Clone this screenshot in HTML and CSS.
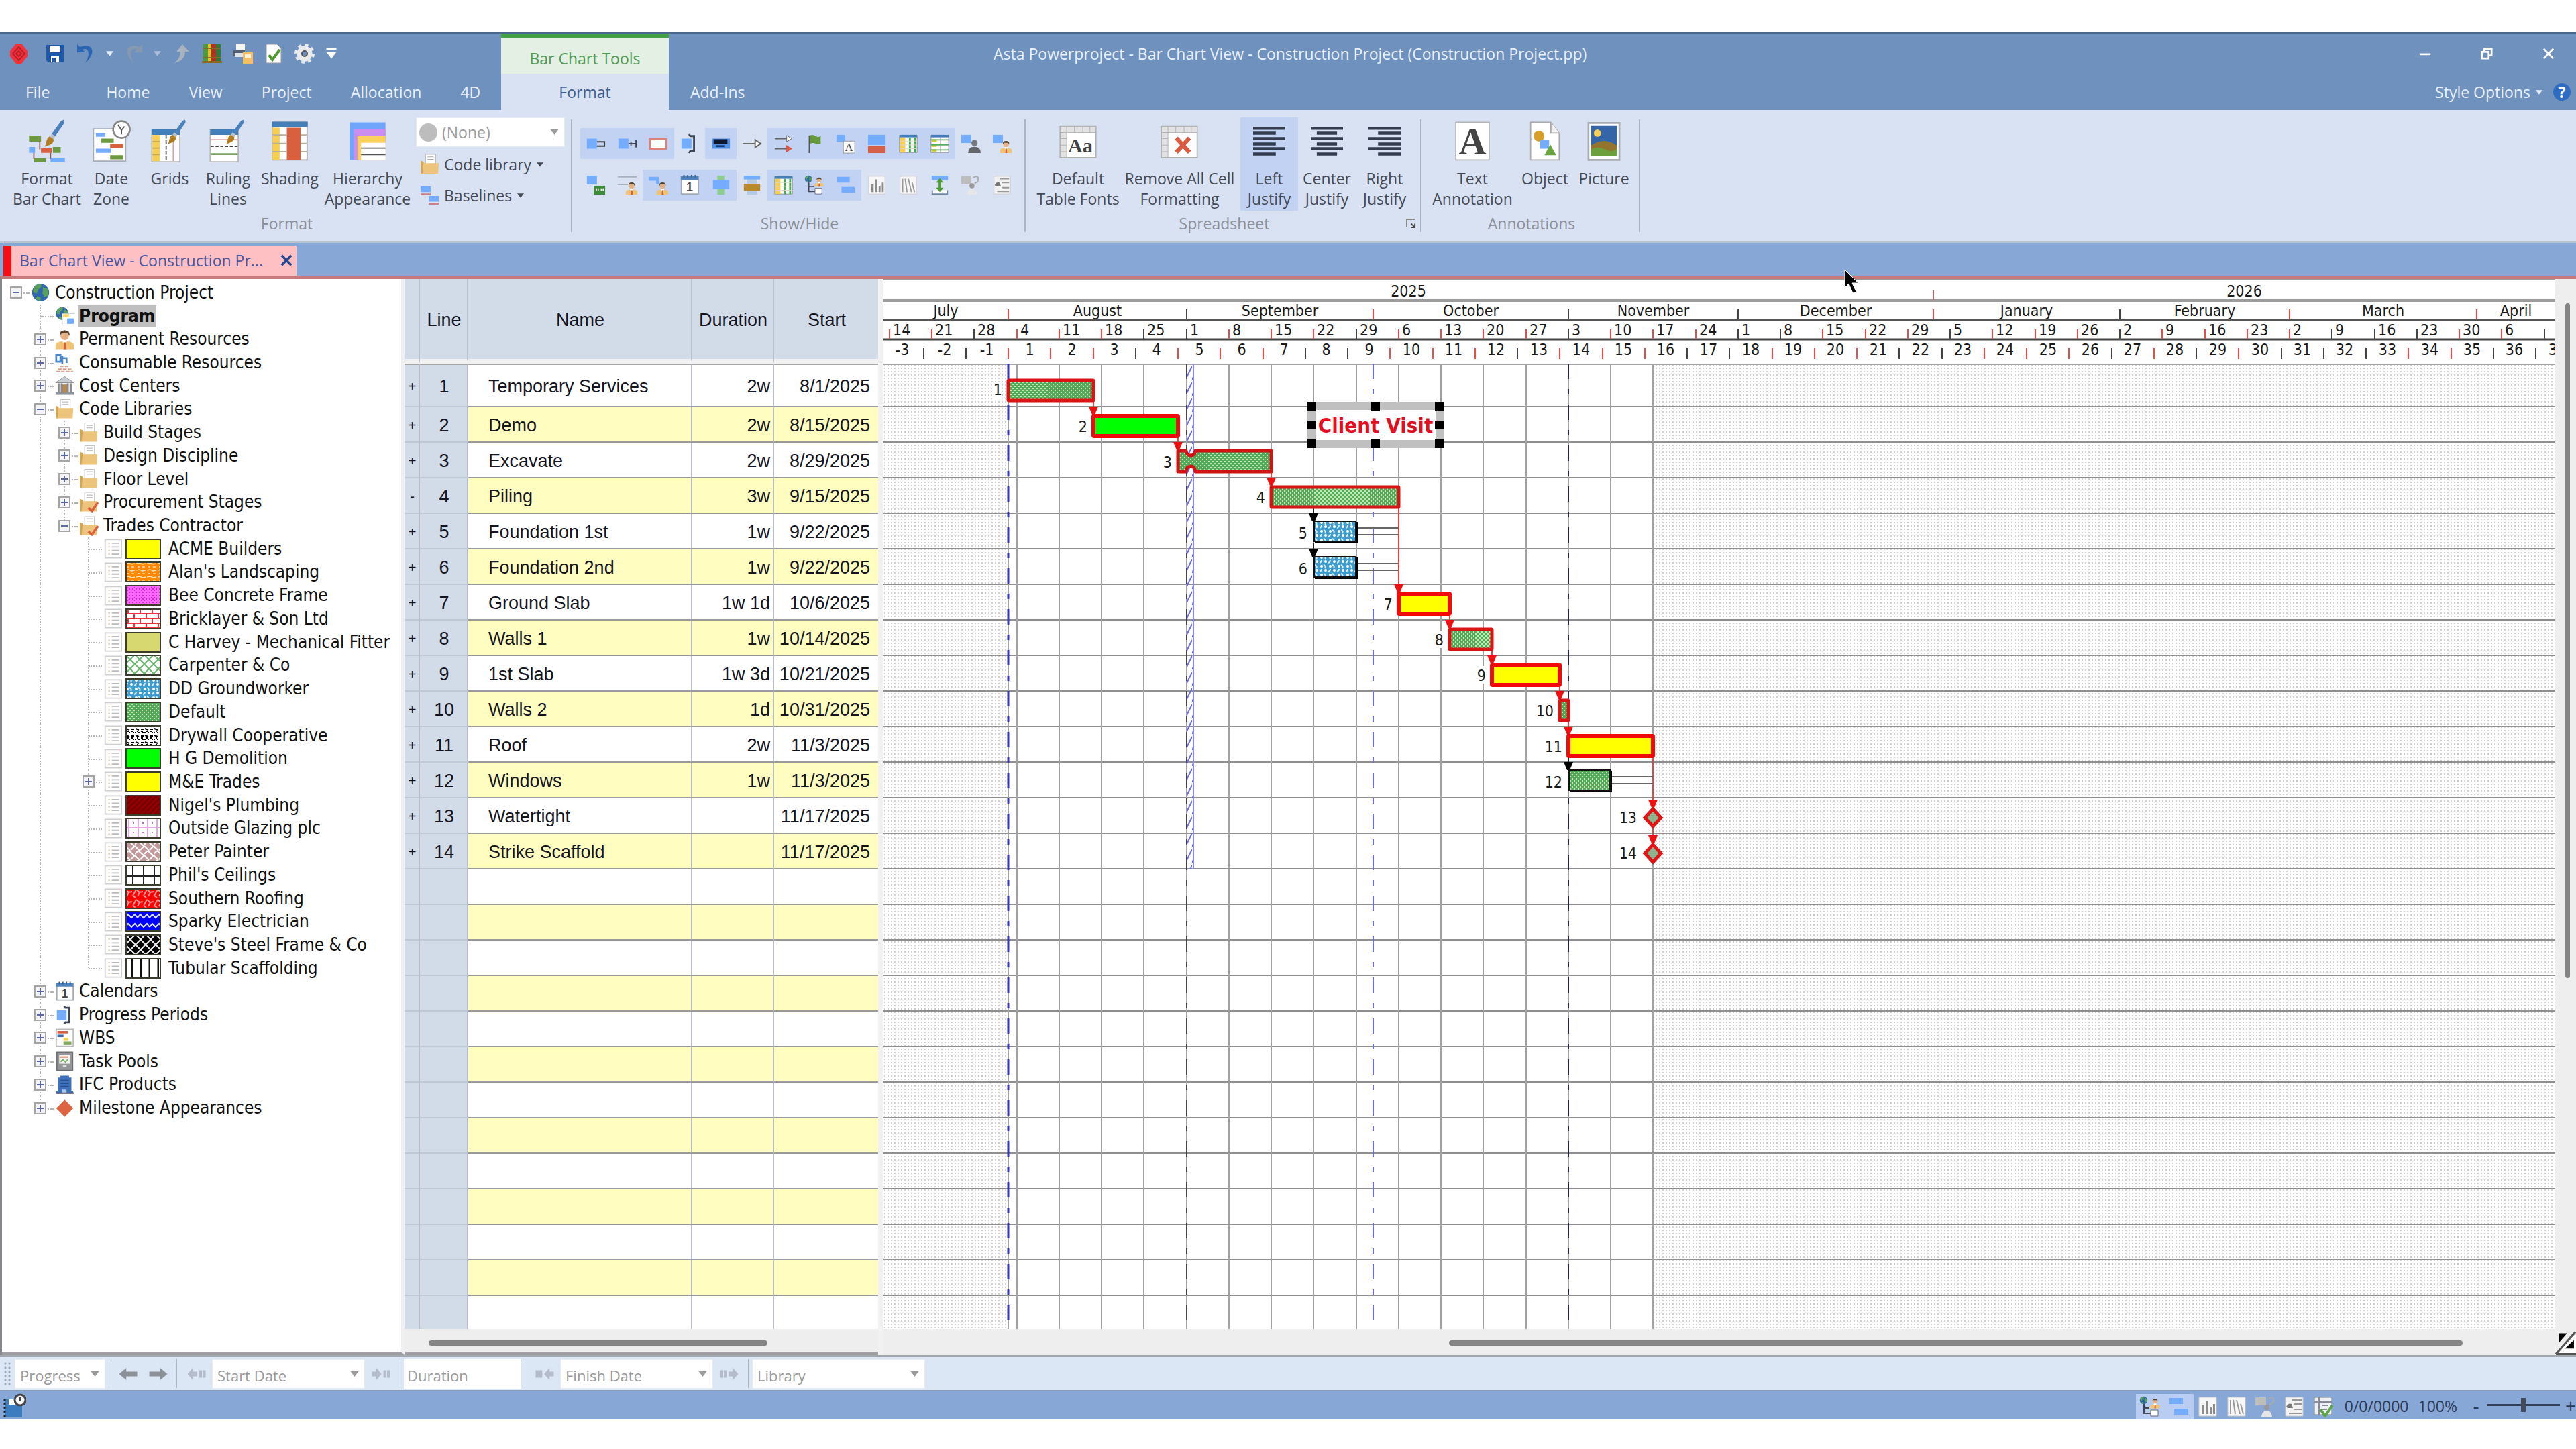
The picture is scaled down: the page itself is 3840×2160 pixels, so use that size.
FILE: index.html
```html
<!DOCTYPE html>
<html lang="en">
  <head>
    <meta charset="utf-8">
    <title>Asta Powerproject - Bar Chart View - Construction Project</title>
    <link rel="stylesheet" href="styles.css">
  </head>
  <body>
    <!-- fill patterns shared by the swatches and the bars -->
    <svg class="patterns" width="0" height="0" aria-hidden="true">
      <defs>
        <pattern id="p-default" width="6" height="6" patternUnits="userSpaceOnUse"><rect width="6" height="6" fill="#55aa58"/><path d="M0 0h2v2H0zM3 3h2v2H3z" fill="#c4e4c4"/></pattern>
        <pattern id="p-orange" width="16" height="10" patternUnits="userSpaceOnUse"><rect width="16" height="10" fill="#ff8800"/><path d="M0 3l5-1 4 2 5-1M2 8h3m4 0h4" stroke="#ffe0b0" stroke-width="1.5" fill="none"/></pattern>
        <pattern id="p-pink" width="5" height="5" patternUnits="userSpaceOnUse"><rect width="5" height="5" fill="#ff66ff"/><path d="M0 0h2v2H0zM3 3h1v1H3z" fill="#c030c8"/></pattern>
        <pattern id="p-brick" width="18" height="14" patternUnits="userSpaceOnUse"><rect width="18" height="14" fill="#fff"/><path d="M0 1h18M0 8h18M4 1v7M13 8v6" stroke="#f0303c" stroke-width="2"/></pattern>
        <pattern id="p-lattice" width="14" height="14" patternUnits="userSpaceOnUse"><rect width="14" height="14" fill="#fff"/><path d="M0 0l14 14M14 0L0 14" stroke="#69b56c" stroke-width="2"/></pattern>
        <pattern id="p-blue" width="13" height="13" patternUnits="userSpaceOnUse"><rect width="13" height="13" fill="#3d9bd0"/><circle cx="3" cy="3" r="2" fill="#fff"/><circle cx="9" cy="9" r="2" fill="#fff"/><path d="M6 1q4 2 2 5M0 11q3-1 3-4" stroke="#d8effc" stroke-width="2" fill="none"/></pattern>
        <pattern id="p-drywall" width="14" height="10" patternUnits="userSpaceOnUse"><rect width="14" height="10" fill="#fff"/><path d="M0 1h2m3 0h2m4 0h2M1 5l5 2m3-1h4M3 9h2m4 0h3" stroke="#000" stroke-width="2"/></pattern>
        <pattern id="p-maroon" width="8" height="8" patternUnits="userSpaceOnUse"><rect width="8" height="8" fill="#900000"/><path d="M0 8L8 0" stroke="#700000" stroke-width="2"/></pattern>
        <pattern id="p-glazing" width="14" height="14" patternUnits="userSpaceOnUse"><rect width="14" height="14" fill="#fff"/><path d="M5 0v14M0 1h14" stroke="#e2a5e6" stroke-width="2"/><path d="M11 7h2v2h-2z" fill="#c070c8"/></pattern>
        <pattern id="p-painter" width="14" height="14" patternUnits="userSpaceOnUse"><rect width="14" height="14" fill="#c39a9c"/><path d="M0 7l7 7M5 0l8 7M0 5l5-5M8 13l6-6" stroke="#fff" stroke-width="2"/></pattern>
        <pattern id="p-ceiling" x="-4" width="16" height="16" patternUnits="userSpaceOnUse"><rect width="16" height="16" fill="#fff"/><path d="M15 0v16M0 1h16" stroke="#222" stroke-width="2"/></pattern>
        <pattern id="p-roof" width="16" height="15" patternUnits="userSpaceOnUse"><rect width="16" height="15" fill="#f00"/><path d="M0 2l5 4 5-1M5 6l-3 6M16 2l-5 9M11 11l4 3" stroke="#ff9a9a" stroke-width="2" fill="none"/></pattern>
        <pattern id="p-spark" width="18" height="14" patternUnits="userSpaceOnUse"><rect width="18" height="14" fill="#00f"/><path d="M0 10l4-5 5 5 5-5 4 5" stroke="#dfe6ff" stroke-width="2" fill="none"/></pattern>
        <pattern id="p-steel" width="15" height="15" patternUnits="userSpaceOnUse"><rect width="15" height="15"/><path d="M0 0l15 15M15 0L0 15" stroke="#eee" stroke-width="2"/></pattern>
        <pattern id="p-tube" x="-2" width="13" height="10" patternUnits="userSpaceOnUse"><rect width="13" height="10" fill="#fff"/><path d="M12 0v10" stroke="#111" stroke-width="3"/></pattern>
        <pattern id="p-nonwork" width="5" height="5" patternUnits="userSpaceOnUse"><rect width="5" height="5" fill="#fff"/><path d="M1 1h2v2H1z" fill="#cfcfcf"/></pattern>
        <pattern id="p-holiday" width="10" height="24" patternUnits="userSpaceOnUse"><path d="M0 24L10 4" stroke="#6a6af0" stroke-width="2"/></pattern>
      </defs>
    </svg>

    <svg class="sprite" aria-hidden="true">
      <symbol id="brush" viewBox="0 0 40 72"><path d="M38 1q3 3 0 8L21 34l-7-5L33 3z" fill="#4a80bb"/><path d="M14 29l7 5-3 6-8-5z" fill="#b9c0c8"/><path d="M10 34l8 6c0 9-8 11-18 15 4-7 2-17 10-21z" fill="#b07c1e"/></symbol>
      <symbol id="person" viewBox="0 0 32 32"><path d="M1 32v-6q0-5 6-6l9-2 9 2q6 1 6 6v6z" fill="#f0c274"/><path d="M12 19l4 5 4-5v-3h-8z" fill="#fff"/><path d="M15 21h3l1 11h-5z" fill="#d2603c"/><circle cx="16" cy="10" r="7" fill="#e3b184"/><path d="M8 10q-1-9 8-9t8 9l-3-4H11z" fill="#57422c"/></symbol>
      <symbol id="globe" viewBox="0 0 32 32"><circle cx="16" cy="16" r="14" fill="#2f66ad"/><path d="M4 9q5-7 12-7 3 3 0 6l-5 4-1 6-6-2zM20 7l7 3q3 5 2 10l-6 4-4-6zM10 22l6 2v5q-5 0-9-4z" fill="#58a05c"/></symbol>

      <symbol id="logo" viewBox="0 0 32 32"><path d="M12 1h8l9 11v8l-9 11h-8L3 20v-8z" fill="#f5303a"/><path d="M16 6l9 10-9 10-9-10zM16 12l4 4-4 4-4-4z" fill="none" stroke="#b51f28" stroke-width="2"/></symbol>
      <symbol id="save" viewBox="0 0 32 32"><path d="M3 3h26v26H6l-3-3z" fill="#1f58a8"/><path d="M8 4h16v10H8zM10 20h12v9H10z" fill="#fff"/><path d="M12 22h5v7h-5z" fill="#1f58a8"/></symbol>
      <symbol id="undo" viewBox="0 0 32 32"><path d="M3 2v12h12l-4-4c7-4 14 4 4 20 18-16 11-31-8-24z" fill="#2b66b3"/></symbol>
      <symbol id="redo" viewBox="0 0 32 32"><path d="M29 2v12H17l4-4c-7-4-14 4-4 20C-1 14 6-1 25 6z" fill="#8698b0"/></symbol>
      <symbol id="up" viewBox="0 0 32 32"><path d="M18 2l10 11h-6q0 13-16 17 9-7 9-17H9z" fill="#a9b2bf"/></symbol>
      <symbol id="books" viewBox="0 0 32 32"><path d="M3 2h7v25H3z" fill="#4c9a3c"/><path d="M10 2h5v25h-5z" fill="#e6c02c"/><path d="M15 2h7v25h-7z" fill="#b3302a"/><path d="M22 2h7v25h-7z" fill="#2f7a34"/><path d="M1 27h30v3H1zM3 7h26v2H3zM3 21h26v2H3z" fill="#8a6a20"/></symbol>
      <symbol id="clone" viewBox="0 0 32 32"><path d="M6 1h13v12H6z" fill="#f4f4f4"/><path d="M1 11h18v8H1z" fill="#56616f"/><path d="M4 15h12v6H4z" fill="#dde3ea"/><path d="M16 14h15v17H16z" fill="#f4bd6a"/><path d="M19 17h9v5h-9z" fill="#fff3dc"/></symbol>
      <symbol id="check" viewBox="0 0 32 32"><path d="M5 2h16l6 6v22H5z" fill="#fff" stroke="#999"/><path d="M9 18l5 7L25 10" fill="none" stroke="#4f9a2e" stroke-width="4"/></symbol>
      <symbol id="gear" viewBox="0 0 32 32"><circle cx="16" cy="16" r="8" fill="none" stroke="#e9eaec" stroke-width="7"/><circle cx="16" cy="16" r="13" fill="none" stroke="#e9eaec" stroke-width="4" stroke-dasharray="5 5.2"/><circle cx="16" cy="16" r="4" fill="none" stroke="#555" stroke-width="2"/></symbol>
      <symbol id="more" viewBox="0 0 20 24"><path d="M1 2h18v3H1zM1 9h18l-9 12z" fill="#fff"/></symbol>
      <symbol id="caret" viewBox="0 0 12 8"><path d="M0 0h12L6 8z" fill="currentColor"/></symbol>

      <symbol id="format" viewBox="0 0 64 72"><path d="M2 27h20v10H2zM42 46h13v10H42zM10 65h20v10H10z" fill="#6d9a3f"/><path d="M2 46h10v10H2zM38 64h24v9H38z" fill="#74acff"/><path d="M22 48h18v8H22z" fill="#d8613f"/><path d="M20 36v14M10 56v10M38 56v10" stroke="#8a5b4b" stroke-width="2"/><use href="#brush" x="25" width="40" height="60"/></symbol>
      <symbol id="datezone" viewBox="0 0 64 72"><path d="M2 16h54v54H2z" fill="#fff" stroke="#a7adb6" stroke-width="2"/><path d="M6 23h16v6H6zM6 49h26v7H6z" fill="#74acff"/><path d="M15 32h21v7H15zM30 60h22v7H30z" fill="#6d9a3f"/><path d="M30 41h22v7H30z" fill="#d8613f"/><circle cx="49" cy="17" r="14" fill="#fff" stroke="#888" stroke-width="3"/><path d="M43 9l6 9 5-6M49 18v7" stroke="#555" stroke-width="2" fill="none"/></symbol>
      <symbol id="grids" viewBox="0 0 64 72"><path d="M2 17h47v54H2z" fill="#fff" stroke="#b6b6b6" stroke-width="2"/><path d="M2 17h47v9H2z" fill="#457fb8"/><path d="M3 26h12v44H3z" fill="#f6cf52"/><path d="M3 37h12M3 48h12M3 59h12" stroke="#c9a94d" stroke-width="2"/><path d="M26 26v44" stroke="#444" stroke-width="2" stroke-dasharray="6 3"/><path d="M38 26v44" stroke="#d9a3a3" stroke-width="2"/><use href="#brush" x="24" width="40" height="54"/></symbol>
      <symbol id="ruling" viewBox="0 0 64 72"><path d="M2 17h47v54H2z" fill="#fff" stroke="#b6b6b6" stroke-width="2"/><path d="M2 17h47v9H2z" fill="#457fb8"/><path d="M3 34h45" stroke="#dba8a8" stroke-width="2"/><path d="M3 45h45" stroke="#444" stroke-width="2" stroke-dasharray="5 3"/><path d="M3 58h45" stroke="#7aa55c" stroke-width="3"/><use href="#brush" x="24" width="40" height="54"/></symbol>
      <symbol id="shading" viewBox="0 0 64 72"><path d="M3 5h58v63H3z" fill="#fff" stroke="#aaa" stroke-width="2"/><path d="M3 14h12v54H3z" fill="#f6cf52"/><path d="M27 14h23v54H27z" fill="#d9603e"/><path d="M3 26h24M3 40h24M3 54h24M50 26h11M50 40h11M50 54h11" stroke="#b9b09a" stroke-width="2"/><path d="M2 4h60v9H2z" fill="#457fb8"/></symbol>
      <symbol id="hier" viewBox="0 0 64 72"><path d="M2 5h60v63H2z" fill="#6fa5fb"/><path d="M9 17h53v51H9z" fill="#cb8ef0"/><path d="M15 28h47v40H15z" fill="#fbd05c"/><path d="M21 39h41v29H21z" fill="#fff"/><path d="M21 48h41M21 59h41" stroke="#555" stroke-width="2"/></symbol>
      <symbol id="sheet-aa" viewBox="0 0 64 72"><path d="M2 12h60v52H2z" fill="#fff" stroke="#b2b2b2" stroke-width="2"/><path d="M3 13h58v9H3zM3 13h10v50H3z" fill="#e2e2e2"/><path d="M2 22h60M13 12v52M3 32h10M3 43h10M3 54h10M26 12v10M40 12v10M52 12v10" stroke="#adadad"/><text x="15" y="55" font-family="Liberation Serif, serif" font-weight="bold" font-size="34" fill="#444">Aa</text></symbol>
      <symbol id="sheet-x" viewBox="0 0 64 72"><path d="M2 12h60v52H2z" fill="#fff" stroke="#b2b2b2" stroke-width="2"/><path d="M3 13h58v9H3zM3 13h10v50H3z" fill="#e2e2e2"/><path d="M2 22h60M13 12v52M3 32h10M3 43h10M3 54h10M26 12v10M40 12v10M52 12v10" stroke="#adadad"/><path d="M27 31l22 24M49 31L27 55" stroke="#da5a40" stroke-width="7"/></symbol>
      <symbol id="jleft" viewBox="0 0 64 72"><path d="M5 15h54M5 23h38M5 32h54M5 41h38M5 49h54M5 58h38" stroke="#343c50" stroke-width="5"/></symbol>
      <symbol id="jcenter" viewBox="0 0 64 72"><path d="M5 15h54M15 23h34M5 32h54M15 41h34M5 49h54M15 58h34" stroke="#343c50" stroke-width="5"/></symbol>
      <symbol id="jright" viewBox="0 0 64 72"><path d="M5 15h54M21 23h38M5 32h54M21 41h38M5 49h54M21 58h38" stroke="#343c50" stroke-width="5"/></symbol>
      <symbol id="textann" viewBox="0 0 64 72"><path d="M4 5h56v63H4z" fill="#fff" stroke="#b5b5b5" stroke-width="2"/><text x="32" y="59" text-anchor="middle" font-family="Liberation Serif, serif" font-weight="bold" font-size="64" fill="#444">A</text></symbol>
      <symbol id="object" viewBox="0 0 64 72"><path d="M8 5h34l14 18v45H8z" fill="#fff" stroke="#aaa" stroke-width="2"/><path d="M42 5v18h14" fill="#f2f2f2" stroke="#aaa" stroke-width="2"/><circle cx="22" cy="28" r="9" fill="#d7a02a"/><path d="M24 34h15v15H24z" fill="#74acff"/><path d="M31 60l10-18 10 18z" fill="#6aa53d"/></symbol>
      <symbol id="picture" viewBox="0 0 64 72"><path d="M6 6h52v62H6z" fill="#fff" stroke="#a9adb2" stroke-width="3"/><path d="M10 11h44v50H10z" fill="#3465a8"/><circle cx="21" cy="23" r="6" fill="#f8cf55"/><path d="M10 44q22-16 44 0v10H10z" fill="#94742c"/><path d="M10 50q12-6 24 0t20-1v12H10z" fill="#6ca03c"/></symbol>

      <symbol id="b1" viewBox="0 0 32 32"><path d="M2 8h16v16H2z" fill="#74acff"/><path d="M18 13h12v7H18" fill="none" stroke="#444" stroke-width="2"/></symbol>
      <symbol id="b2" viewBox="0 0 32 32"><path d="M2 8h16v16H2z" fill="#74acff"/><path d="M18 16h12M30 10v12M22 13v6" fill="none" stroke="#445" stroke-width="2"/></symbol>
      <symbol id="b3" viewBox="0 0 32 32"><path d="M3 9h26v15H3z" fill="#fff" stroke="#d9837a" stroke-width="3"/></symbol>
      <symbol id="b4" viewBox="0 0 32 32"><path d="M3 8h16v16H3z" fill="#74acff"/><path d="M15 1l2 3h6v24h-6l-2 3" fill="none" stroke="#3d4654" stroke-width="3"/></symbol>
      <symbol id="b5" viewBox="0 0 32 32"><path d="M2 8h28v16H2z" fill="#4f8fe8"/><path d="M4 9h22v8H4z" fill="#0b1730"/><path d="M8 20h14" stroke="#17386e" stroke-width="3"/></symbol>
      <symbol id="b6" viewBox="0 0 32 32"><path d="M1 16h20" stroke="#666" stroke-width="2"/><path d="M21 10l9 6-9 6z" fill="#fff" stroke="#666" stroke-width="2"/></symbol>
      <symbol id="b7" viewBox="0 0 32 32"><path d="M2 8h20M2 24h20" stroke="#666" stroke-width="2"/><path d="M21 3l8 5-8 5z" fill="#fff" stroke="#666"/><path d="M20 18l10 6-10 6z" fill="#dc5a44"/></symbol>
      <symbol id="b8" viewBox="0 0 32 32"><path d="M8 3v28" stroke="#555" stroke-width="2"/><path d="M9 3q5-2 9 1t8 0v12q-4 2-8 0t-9 0z" fill="#64983a"/></symbol>
      <symbol id="b9" viewBox="0 0 32 32"><path d="M1 2h14v11H1z" fill="#74acff"/><path d="M12 12h18v19H12z" fill="#fff" stroke="#999"/><text x="21" y="28" text-anchor="middle" font-family="Liberation Serif, serif" font-size="18" fill="#444">A</text></symbol>
      <symbol id="b10" viewBox="0 0 32 32"><path d="M2 2h28v16H2z" fill="#74acff"/><path d="M2 20h28v11H2z" fill="#d6604a"/></symbol>
      <symbol id="b11" viewBox="0 0 32 32"><path d="M2 3h28v27H2z" fill="#fff" stroke="#888"/><path d="M3 6h8v24H3z" fill="#f6cf52"/><path d="M17 6h3v24h-3zM25 6h3v24h-3z" fill="#3fae48"/><path d="M2 12h28M2 18h28M2 24h28" stroke="#d8d8c8"/><path d="M2 2h28v4H2z" fill="#457fb8"/></symbol>
      <symbol id="b12" viewBox="0 0 32 32"><path d="M2 3h28v27H2z" fill="#fff" stroke="#888"/><path d="M3 9h8v4H3zM3 17h8v4H3zM3 25h8v4H3z" fill="#d9d23c"/><path d="M2 10h28M2 18h28M2 26h28" stroke="#52b058" stroke-width="2"/><path d="M17 6v24M24 6v24" stroke="#999"/><path d="M2 2h28v4H2z" fill="#457fb8"/></symbol>
      <symbol id="b13" viewBox="0 0 32 32"><path d="M1 2h16v13H1z" fill="#74acff"/><circle cx="22" cy="15" r="5" fill="#777b80"/><path d="M12 31q0-10 10-10t10 10z" fill="#63676c"/></symbol>
      <symbol id="b14" viewBox="0 0 32 32"><path d="M1 2h16v13H1z" fill="#74acff"/><use href="#person" x="12" y="11" width="20" height="20"/></symbol>
      <symbol id="c1" viewBox="0 0 32 32"><path d="M2 1h16v14H2z" fill="#74acff"/><path d="M13 17h18v14H13z" fill="#3f8a3a"/><path d="M17 21v4m3-4v4m5-4v4m3-4v4" stroke="#e6f3e4" stroke-width="2"/></symbol>
      <symbol id="c2" viewBox="0 0 32 32"><path d="M1 3h30M1 15h16" stroke="#aab0ba" stroke-width="2"/><use href="#person" x="13" y="11" width="20" height="20"/></symbol>
      <symbol id="c3" viewBox="0 0 32 32"><path d="M1 3h16v6H1zM13 9h5v6h-5z" fill="#74acff"/><use href="#person" x="13" y="11" width="20" height="20"/></symbol>
      <symbol id="cal" viewBox="0 0 32 32"><path d="M3 3h27v27H3z" fill="#fff" stroke="#a3a9b2" stroke-width="2"/><path d="M2 2h28v6H2z" fill="#4f83bd"/><path d="M7 0v4M13 0v4M19 0v4M25 0v4" stroke="#35608f" stroke-width="2"/><text x="16" y="26" text-anchor="middle" font-family="Liberation Sans, sans-serif" font-weight="bold" font-size="19" fill="#444">1</text></symbol>
      <symbol id="c5" viewBox="0 0 32 32"><path d="M10 1h12v30H10z" fill="#8ecb8e"/><path d="M3 8h26v14H3z" fill="#74acff"/></symbol>
      <symbol id="c6" viewBox="0 0 32 32"><path d="M8 1h16v30H8z" fill="#b4cbe0"/><path d="M3 1h26v6H3z" fill="#74acff"/><path d="M3 14h26v11H3z" fill="#b98a2a"/></symbol>
      <symbol id="c8" viewBox="0 0 32 32"><use href="#globe" x="0" y="0" width="13" height="13"/><path d="M7 12v14h10M7 18h8" fill="none" stroke="#445" stroke-width="2"/><use href="#person" x="16" y="3" width="15" height="16"/><path d="M17 21h11v9H17z" fill="#fff" stroke="#667"/></symbol>
      <symbol id="c9" viewBox="0 0 32 32"><path d="M2 3h20v9H2zM9 19h21v9H9z" fill="#74acff"/></symbol>
      <symbol id="c10" viewBox="0 0 32 32"><path d="M3 2h26v28H3z" fill="#f7f7f7" stroke="#ccc"/><path d="M7 14h4v13H7zM13 7h4v20h-4zM19 17h3v10h-3zM24 12h3v15h-3z" fill="#8d8d8d"/></symbol>
      <symbol id="c11" viewBox="0 0 32 32"><path d="M3 2h26v28H3z" fill="#f7f7f7" stroke="#ccc"/><path d="M7 6v21M11 6l3 21M16 6l5 21M22 12l4 15" stroke="#999" stroke-width="2"/></symbol>
      <symbol id="c12" viewBox="0 0 32 32"><path d="M3 1h26v7H3z" fill="#74acff"/><path d="M4 24v6h24v-6" fill="#fff" stroke="#6f86a3" stroke-width="2"/><path d="M16 5l6 7h-4v8h4l-6 7-6-7h4v-8h-4z" fill="#4e9c34"/></symbol>
      <symbol id="c13" viewBox="0 0 32 32"><path d="M1 2h16v12H1z" fill="#bdbdbd"/><path d="M20 4q8-4 8 2t-5 6v2" stroke="#aaa" stroke-width="2" fill="none"/><circle cx="18" cy="17" r="4" fill="#999"/><path d="M10 31q1-9 8-9t8 9z" fill="#e6e6e6"/></symbol>
      <symbol id="c14" viewBox="0 0 32 32"><path d="M3 2h26v28H3z" fill="#f2f2f2" stroke="#ccc"/><path d="M12 6h15M16 12h11M16 20h11M8 26h19" stroke="#999" stroke-width="2"/><path d="M4 16q3-6 8-4l2 6H6z" fill="#777"/></symbol>
      <symbol id="c15" viewBox="0 0 32 32"><path d="M3 2h26v26H3z" fill="#eef2f8" stroke="#777"/><path d="M3 9h26M10 2v26M14 14h10M14 20h8" stroke="#889" stroke-width="2"/><path d="M12 20l7 10L30 14" stroke="#5ea646" stroke-width="4" fill="none"/></symbol>
      <symbol id="baselines" viewBox="0 0 32 32"><path d="M1 2h16v9H1zM14 17h16v9H14z" fill="#74acff"/><path d="M1 13h16v3H1zM14 28h16v3H14z" fill="#c8808a"/></symbol>
      <symbol id="launcher" viewBox="0 0 16 16"><path d="M1 13V1h13" fill="none" stroke="#888" stroke-width="2"/><path d="M8 8l5 5M14 8v6H8" fill="none" stroke="#444" stroke-width="2"/></symbol>

      <symbol id="program" viewBox="0 0 32 32"><use href="#globe" width="24" height="24"/><path d="M12 12h20v19H12z" fill="#fff" stroke="#bcc4cf"/><path d="M13 13h10v5H13z" fill="#f8d768"/><path d="M20 20h11v9H20z" fill="#74acff"/></symbol>
      <symbol id="consum" viewBox="0 0 32 32"><path d="M2 3h7v11H2zM12 8h7v8M12 4v13" fill="none" stroke="#4d86c4" stroke-width="3"/><path d="M8 22h14M5 26h22M2 30h28" stroke="#d9a08c" stroke-width="2" stroke-dasharray="6 2"/></symbol>
      <symbol id="bank" viewBox="0 0 32 32"><path d="M1 11L16 1l15 10z" fill="#c9ced4" stroke="#888"/><path d="M4 12h24v15H4z" fill="#e3e5e8"/><path d="M12 14h8v13h-8z" fill="#b58a4c"/><path d="M6 12v15M11 12v15M21 12v15M26 12v15" stroke="#888" stroke-width="3"/><path d="M1 27h30v4H1z" fill="#8f949b"/></symbol>
      <symbol id="folder" viewBox="0 0 32 32"><path d="M9 0h16v18H9z" fill="#fff" stroke="#bbb"/><path d="M12 4h10M12 8h10" stroke="#aaa"/><path d="M1 10l4 4h25l-1 17H3z" fill="#ecc47c"/><path d="M1 10l5 2-2 19H2z" fill="#d4a552"/></symbol>
      <symbol id="foldercheck" viewBox="0 0 32 32"><use href="#folder" width="32" height="32"/><path d="M15 25l6 5L31 16" fill="none" stroke="#d9603e" stroke-width="4"/></symbol>
      <symbol id="list" viewBox="0 0 32 32"><path d="M3 1h27v30H3z" fill="#fff" stroke="#cfcfcf" stroke-width="2"/><path d="M14 7h12M14 13h12M14 19h12M14 25h12" stroke="#bbb" stroke-width="2"/><path d="M8 7h3M8 13h3M8 19h3M8 25h3" stroke="#e8cfae" stroke-width="2"/></symbol>
      <symbol id="wbs" viewBox="0 0 32 32"><path d="M2 2h28v28H2z" fill="#fff" stroke="#bbb" stroke-width="2"/><path d="M4 5h17v4H4z" fill="#d9603e"/><path d="M4 11h10v4H4z" fill="#3c6db0"/><path d="M14 16h8v5h-8z" fill="#f2cf56"/><path d="M14 22h13v6H14z" fill="#84a860"/></symbol>
      <symbol id="pool" viewBox="0 0 32 32"><path d="M3 1h26v30H3z" fill="#94969a" stroke="#6e7074" stroke-width="2"/><path d="M7 6h18v14H7z" fill="#f3f3ee"/><path d="M8 9h14" stroke="#e2705a" stroke-width="2"/><path d="M9 17l4-4 4 4 4-4" stroke="#79b06b" stroke-width="2" fill="none"/><path d="M13 24h6" stroke="#ddd" stroke-width="3"/></symbol>
      <symbol id="ifc" viewBox="0 0 32 32"><path d="M9 1h14v3h4v22h3v5H2v-5h3V4h4z" fill="#3d71bd"/><path d="M9 9h14M9 14h14M9 19h14" stroke="#274f8c" stroke-width="2"/><path d="M12 24h7v7h-7z" fill="#a8c6ee"/><path d="M1 30h30" stroke="#555" stroke-width="2"/></symbol>
      <symbol id="milestone" viewBox="0 0 32 32"><path d="M16 2l14 14-14 14L2 16z" fill="#dc6443"/></symbol>
      <symbol id="arrow-l" viewBox="0 0 32 20"><path d="M1 10L13 0v6h18v8H13v6z" fill="currentColor"/></symbol>
      <symbol id="arrow-r" viewBox="0 0 32 20"><path d="M31 10L19 0v6H1v8h18v6z" fill="currentColor"/></symbol>
      <symbol id="arrow-ls" viewBox="0 0 32 20"><path d="M1 10L10 0v6h7v8h-7v6zM20 4h5v12h-5zM26 4h5v12h-5z" fill="currentColor"/></symbol>
      <symbol id="arrow-rs" viewBox="0 0 32 20"><path d="M17 10L8 0v6H1v8h7v6zM20 4h5v12h-5zM26 4h5v12h-5z" fill="currentColor"/></symbol>
      <symbol id="arrow-sl" viewBox="0 0 32 20"><path d="M15 10L24 0v6h7v8h-7v6zM1 4h5v12H1zM7 4h5v12H7z" fill="currentColor"/></symbol>
      <symbol id="arrow-sr" viewBox="0 0 32 20"><path d="M31 10L22 0v6h-7v8h7v6zM1 4h5v12H1zM7 4h5v12H7z" fill="currentColor"/></symbol>
    </svg>

    <div class="window">
      <header class="titlebar">
        <div class="title-left">
          <div class="quick-access">
            <button aria-label="Powerproject"><svg><use href="#logo"/></svg></button>
            <button aria-label="Save"><svg><use href="#save"/></svg></button>
            <button aria-label="Undo"><svg><use href="#undo"/></svg></button>
            <button class="drop" aria-label="Undo list"><svg><use href="#caret"/></svg></button>
            <button aria-label="Redo"><svg><use href="#redo"/></svg></button>
            <button class="drop dim" aria-label="Redo list"><svg><use href="#caret"/></svg></button>
            <button aria-label="Up"><svg><use href="#up"/></svg></button>
            <button aria-label="Library explorer"><svg><use href="#books"/></svg></button>
            <button aria-label="Clone"><svg><use href="#clone"/></svg></button>
            <button aria-label="Check"><svg><use href="#check"/></svg></button>
            <button aria-label="Options"><svg><use href="#gear"/></svg></button>
            <button class="more" aria-label="Customize"><svg><use href="#more"/></svg></button>
          </div>
          <nav class="tabs">
            <button class="file">File</button>
            <button>Home</button>
            <button>View</button>
            <button>Project</button>
            <button>Allocation</button>
            <button>4D</button>
          </nav>
        </div>
        <div class="title-context">
          <div class="context-name">Bar Chart Tools</div>
          <button class="context-tab">Format</button>
        </div>
        <div class="title-right">
          <div class="caption">
            <h1>Asta Powerproject - Bar Chart View - Construction Project (Construction Project.pp)</h1>
            <div class="controls">
              <button aria-label="Minimize"><svg viewBox="0 0 20 20"><path d="M1 11h18" stroke="#fff" stroke-width="3"/></svg></button>
              <button aria-label="Restore"><svg viewBox="0 0 20 20"><path d="M6 6V2h12v11h-4M2 7h11v11H2z" fill="none" stroke="#fff" stroke-width="3"/></svg></button>
              <button aria-label="Close"><svg viewBox="0 0 20 20"><path d="M2 2l16 16M18 2L2 18" stroke="#fff" stroke-width="3"/></svg></button>
            </div>
          </div>
          <div class="tabs-right">
            <button>Add-Ins</button>
            <div class="style-options">
              <button>Style Options <svg><use href="#caret"/></svg></button>
              <button class="help" aria-label="Help">?</button>
            </div>
          </div>
        </div>
      </header>

      <section class="ribbon">
        <div class="group">
          <div class="group-body format-body">
            <button class="big"><svg><use href="#format"/></svg><span>Format<br>Bar Chart</span></button>
            <button class="big"><svg><use href="#datezone"/></svg><span>Date<br>Zone</span></button>
            <button class="big"><svg><use href="#grids"/></svg><span>Grids</span></button>
            <button class="big"><svg><use href="#ruling"/></svg><span>Ruling<br>Lines</span></button>
            <button class="big"><svg><use href="#shading"/></svg><span>Shading</span></button>
            <button class="big"><svg><use href="#hier"/></svg><span>Hierarchy<br>Appearance</span></button>
            <div class="stack">
              <div class="combo none-combo">
                <span class="dot"></span>
                <select aria-label="Appearance"><option>(None)</option></select>
                <svg class="chev"><use href="#caret"/></svg>
              </div>
              <button class="line-btn"><svg class="ico"><use href="#folder"/></svg>Code library <svg class="chev"><use href="#caret"/></svg></button>
              <button class="line-btn"><svg class="ico"><use href="#baselines"/></svg>Baselines <svg class="chev"><use href="#caret"/></svg></button>
            </div>
          </div>
          <div class="group-name">Format</div>
        </div>
        <span class="sep"></span>
        <div class="group">
          <div class="group-body toggles" id="toggles"></div>
          <div class="group-name">Show/Hide</div>
        </div>
        <span class="sep"></span>
        <div class="group">
          <div class="group-body sheet-body">
            <button class="big"><svg><use href="#sheet-aa"/></svg><span>Default<br>Table Fonts</span></button>
            <button class="big"><svg><use href="#sheet-x"/></svg><span>Remove All Cell<br>Formatting</span></button>
            <button class="big on"><svg><use href="#jleft"/></svg><span>Left<br>Justify</span></button>
            <button class="big"><svg><use href="#jcenter"/></svg><span>Center<br>Justify</span></button>
            <button class="big"><svg><use href="#jright"/></svg><span>Right<br>Justify</span></button>
          </div>
          <div class="group-name">Spreadsheet<button class="launcher" aria-label="Spreadsheet settings"><svg><use href="#launcher"/></svg></button></div>
        </div>
        <span class="sep"></span>
        <div class="group">
          <div class="group-body ann-body">
            <button class="big"><svg><use href="#textann"/></svg><span>Text<br>Annotation</span></button>
            <button class="big"><svg><use href="#object"/></svg><span>Object</span></button>
            <button class="big"><svg><use href="#picture"/></svg><span>Picture</span></button>
          </div>
          <div class="group-name">Annotations</div>
        </div>
        <span class="sep"></span>
      </section>

      <div class="doc-tabs">
        <div class="doc-tab">
          <span>Bar Chart View - Construction Pr...</span>
          <button aria-label="Close view"><svg viewBox="0 0 20 20"><path d="M2 2l16 16M18 2L2 18" stroke="#24478f" stroke-width="4"/></svg></button>
        </div>
      </div>

      <main class="workspace">
        <aside class="sidebar"><ul class="tree" id="tree"></ul></aside>
        <div class="table-pane">
          <table>
            <colgroup><col class="c-mark"><col class="c-line"><col class="c-name"><col class="c-dur"><col class="c-start"></colgroup>
            <thead><tr><th></th><th>Line</th><th>Name</th><th>Duration</th><th>Start</th></tr></thead>
            <tbody id="rows"></tbody>
          </table>
          <div class="hscroll"><span class="thumb table-thumb"></span></div>
        </div>
        <div class="chart-pane">
          <svg class="timescale" id="timescale"></svg>
          <svg class="chart" id="chart"></svg>
          <div class="hscroll"><span class="thumb chart-thumb"></span></div>
        </div>
        <div class="vscroll">
          <span class="vthumb"></span>
          <svg class="corner" viewBox="0 0 30 34"><path d="M0 34L28 0h2v34z" fill="#fff"/><path d="M1 33L29 1M1 33h29" stroke="#555" stroke-width="3"/><path d="M5 3h12L5 17zM27 13v12H14z"/></svg>
        </div>
      </main>

      <footer class="edit-bar">
        <span class="grip"></span>
        <div class="combo w-progress"><select aria-label="Progress"><option>Progress</option></select><svg class="chev"><use href="#caret"/></svg></div>
        <span class="sep"></span>
        <button aria-label="Previous"><svg><use href="#arrow-l"/></svg></button>
        <button aria-label="Next"><svg><use href="#arrow-r"/></svg></button>
        <span class="sep"></span>
        <button class="pale" aria-label="Start earlier"><svg><use href="#arrow-ls"/></svg></button>
        <div class="combo w-date"><select aria-label="Start Date"><option>Start Date</option></select><svg class="chev"><use href="#caret"/></svg></div>
        <button class="pale" aria-label="Start later"><svg><use href="#arrow-rs"/></svg></button>
        <span class="sep"></span>
        <input class="w-duration" type="text" aria-label="Duration" placeholder="Duration">
        <span class="sep"></span>
        <button class="pale" aria-label="Finish earlier"><svg><use href="#arrow-sl"/></svg></button>
        <div class="combo w-date"><select aria-label="Finish Date"><option>Finish Date</option></select><svg class="chev"><use href="#caret"/></svg></div>
        <button class="pale" aria-label="Finish later"><svg><use href="#arrow-sr"/></svg></button>
        <span class="sep"></span>
        <div class="combo w-library"><select aria-label="Library"><option>Library</option></select><svg class="chev"><use href="#caret"/></svg></div>
      </footer>

      <div class="status-bar">
        <svg class="status-left" viewBox="0 0 34 36"><path d="M2 8h14v10h12v17H2z" fill="#3c7dc0"/><path d="M2 8v27" stroke="#222" stroke-width="3" stroke-dasharray="3 3"/><path d="M8 9h12v8H8z" fill="#fff"/><circle cx="25" cy="10" r="8" fill="#fff" stroke="#444" stroke-width="3"/><path d="M25 5v6" stroke="#444" stroke-width="2"/></svg>
        <div class="status-icons">
          <button class="on" aria-label="Project view"><svg><use href="#c8"/></svg></button>
          <button class="on" aria-label="Bar chart"><svg><use href="#c9"/></svg></button>
          <button aria-label="Histogram"><svg><use href="#c10"/></svg></button>
          <button aria-label="Line graph"><svg><use href="#c11"/></svg></button>
          <button aria-label="Resource query"><svg><use href="#c13"/></svg></button>
          <button aria-label="Properties"><svg><use href="#c14"/></svg></button>
          <button aria-label="Checks"><svg><use href="#c15"/></svg></button>
        </div>
        <span class="status-date">0/0/0000</span>
        <span class="status-zoom">100%</span>
        <button class="zoom-btn" aria-label="Zoom out">-</button>
        <input type="range" min="0" max="200" value="100" aria-label="Zoom">
        <button class="zoom-btn" aria-label="Zoom in">+</button>
      </div>

      <svg class="pointer" viewBox="0 0 22 38"><path d="M1 1v27l6-6 6 14 5-2-6-13h9z" stroke="#fff"/></svg>
    </div>
    <script src="script.js"></script>
  </body>
</html>
```
FILE: styles.css
```css
* {
  box-sizing: border-box;
}
body {
  margin: 0;
  padding: 48px 0 44px;
  background: #fff;
  font-family: "Open Sans", "Noto Sans", sans-serif;
  font-size: 23px;
  color: #444a55;
}
button, select, input {
  font: inherit;
  color: inherit;
  background: none;
  border: none;
  padding: 0;
  margin: 0;
}
svg {
  display: block;
  flex: none;
}
.patterns {
  position: absolute;
}
.sprite {
  display: none;
}
.window {
  position: relative;
}

/* title bar */
.titlebar {
  display: grid;
  grid-template-columns: 747px 250px 1fr;
  height: 116px;
  background: #6f91be;
  border-top: 2px solid #4c678c;
  color: #e9f0fa;
}
.quick-access {
  display: flex;
  align-items: center;
  height: 60px;
  padding-left: 12px;
  gap: 14px;
}
.quick-access svg {
  width: 32px;
  height: 32px;
}
.quick-access button:nth-child(2) {
  margin-left: 8px;
}
.quick-access .drop svg {
  width: 11px;
  height: 8px;
}
.quick-access .more svg {
  width: 20px;
  height: 20px;
}
.quick-access .dim {
  color: #a9bcd8;
}
.tabs {
  display: flex;
  align-items: center;
  gap: 58px;
  height: 54px;
  padding-left: 38px;
}
.tabs .file {
  margin-right: 26px;
}
.context-name {
  height: 60px;
  padding-top: 6px;
  border-top: 6px solid #45a147;
  background: #e4f0e4;
  color: #4f9a55;
  line-height: 50px;
  text-align: center;
}
.context-tab {
  width: 100%;
  height: 54px;
  background: #d8e2f3;
  color: #3d5f94;
}
.caption {
  display: flex;
  justify-content: space-between;
  height: 60px;
  padding: 0 32px 0 484px;
}
.caption h1 {
  margin: 0;
  font-size: 23px;
  font-weight: 400;
  line-height: 60px;
}
.controls {
  display: flex;
  align-items: center;
  gap: 74px;
}
.controls svg {
  width: 18px;
  height: 18px;
}
.tabs-right, .style-options {
  display: flex;
  align-items: center;
}
.tabs-right {
  justify-content: space-between;
  height: 54px;
  padding: 0 8px 0 32px;
}
.style-options {
  gap: 16px;
}
.style-options button {
  display: flex;
  align-items: center;
  gap: 8px;
}
.style-options svg {
  width: 10px;
  height: 7px;
}
.style-options .help {
  justify-content: center;
  width: 26px;
  height: 26px;
  border-radius: 50%;
  background: #2e6cc4;
  color: #fff;
  font-weight: 700;
}

/* ribbon */
.ribbon {
  display: flex;
  height: 198px;
  background: #d8e2f3;
  border-bottom: 2px solid #b9c2cf;
}
.ribbon .sep {
  width: 2px;
  margin: 14px 0;
  background: #a9b3c2;
}
.group {
  padding-top: 11px;
}
.group-body {
  display: grid;
  height: 139px;
}
.group-name {
  position: relative;
  margin-top: 4px;
  padding-left: 4px;
  line-height: 30px;
  text-align: center;
  color: #8b8f97;
}
.format-body {
  grid-template-columns: 96px 96px 78px 96px 88px 144px 222px;
  padding: 0 9px 0 22px;
}
.sheet-body {
  grid-template-columns: 122px 181px 86px 86px 86px;
  padding: 0 10px 0 17px;
}
.ann-body {
  grid-template-columns: 116px 100px 76px;
  padding: 0 14px 0 18px;
}
.big {
  display: grid;
  grid-template-rows: 64px 60px;
  row-gap: 9px;
  align-content: start;
  justify-content: center;
  justify-items: center;
  height: 139px;
  padding-top: 3px;
  line-height: 30px;
  white-space: nowrap;
}
.big svg {
  width: 60px;
  height: 64px;
}
.big.on, .toggles .on {
  background: #c1d2f3;
}
.stack {
  display: flex;
  flex-direction: column;
}
.combo {
  display: flex;
  align-items: center;
  height: 44px;
  background: #fff;
  border: 1px solid #e6ebf2;
  color: #9a9a9a;
}
.combo select {
  flex: 1;
  min-width: 0;
  height: 100%;
  padding-left: 7px;
  appearance: none;
}
.chev {
  width: 13px;
  height: 8px;
  margin: 0 8px;
}
.none-combo {
  margin-bottom: 3px;
}
.dot {
  width: 27px;
  height: 27px;
  margin-left: 4px;
  border-radius: 50%;
  background: #bdbdbd;
}
.line-btn {
  display: flex;
  align-items: center;
  height: 46px;
}
.line-btn .ico {
  width: 30px;
  height: 32px;
  margin: 0 6px;
}
.line-btn .chev {
  width: 10px;
  height: 7px;
}
.toggles {
  grid-template-columns: repeat(14, 1fr);
  grid-template-rows: 46px 46px;
  row-gap: 16px;
  width: 674px;
  padding: 16px 10px 0 12px;
}
.toggles button {
  display: grid;
  place-items: center;
}
.toggles svg {
  width: 30px;
  height: 32px;
}
.launcher {
  position: absolute;
  right: 6px;
  top: 8px;
}
.launcher svg {
  width: 15px;
  height: 15px;
}

/* open document tabs */
.doc-tabs {
  height: 49px;
  padding: 4px 5px 0;
  background: #87a7d6;
}
.doc-tab {
  display: flex;
  align-items: center;
  justify-content: space-between;
  width: 437px;
  height: 45px;
  padding: 0 6px 2px 12px;
  border-left: 12px solid #f80d12;
  background: #fec0c2;
  color: #4656a0;
}
.doc-tab svg {
  width: 18px;
  height: 18px;
}

/* workspace */
.workspace {
  display: grid;
  grid-template-columns: 600px 706px 1fr 31px;
  height: 1609px;
  border-top: 5px solid #c77a7c;
  border-left: 3px solid #85888d;
  background: #fff;
}
.sidebar {
  padding: 3px 0 0 3px;
  border-right: 5px solid #f0f0f2;
  border-bottom: 5px solid #a3a0a4;
}
.tree {
  display: flex;
  flex-direction: column;
  height: 1250px;
  margin: 0;
  padding: 0;
  list-style: none;
  font-family: "DejaVu Sans Condensed", "DejaVu Sans", sans-serif;
  font-stretch: condensed;
  font-size: 26px;
  color: #111;
}
.tree li {
  flex: 1;
  display: flex;
  align-items: center;
  white-space: nowrap;
}
.tree .cell {
  position: relative;
  display: grid;
  place-items: center;
  width: 36px;
  height: 100%;
}
.tree .v::before {
  content: "";
  position: absolute;
  left: 17px;
  top: 0;
  bottom: 0;
  border-left: 2px dotted #b5b5b5;
}
.tree .v.last::before {
  bottom: 50%;
}
.tree .h::after {
  content: "";
  position: absolute;
  left: 18px;
  right: -2px;
  top: 50%;
  border-top: 2px dotted #b5b5b5;
}
.tree .expander {
  position: relative;
  z-index: 1;
  width: 18px;
  height: 18px;
  border: 2px solid #a5a5a5;
  background: linear-gradient(#5a68a8, #5a68a8) center / 10px 2px no-repeat #f4f4f6;
}
.tree .expander.plus {
  background: linear-gradient(#5a68a8, #5a68a8) center / 10px 2px no-repeat, linear-gradient(#5a68a8, #5a68a8) center / 2px 10px no-repeat, #f4f4f6;
}
.tree .icon {
  width: 29px;
  height: 30px;
}
.tree .swatch {
  width: 53px;
  height: 31px;
  margin-left: 1px;
  margin-right: 7px;
}
.tree .label {
  margin-left: 2px;
  padding: 0 2px;
  line-height: 33px;
}
.tree .selected {
  background: #bfbfbf;
  font-weight: 700;
}

.table-pane, .chart-pane {
  display: flex;
  flex-direction: column;
  min-width: 0;
}
.table-pane {
  border-bottom: 5px solid #a3a0a4;
}
table {
  width: 100%;
  table-layout: fixed;
  border-collapse: separate;
  border-spacing: 0;
  font-family: "Liberation Sans", Arial, sans-serif;
  font-size: 27px;
  line-height: 30px;
  color: #15151f;
}
.c-mark { width: 23px; }
.c-line { width: 72px; }
.c-name { width: 334px; }
.c-dur { width: 122px; }
.c-start { width: 155px; }
th {
  height: 126px;
  padding: 3px 0 0 2px;
  background: #d2dce9;
  border-right: 2px solid #b9c3cf;
  border-bottom: 7px solid #f1f1f1;
  font-weight: 400;
}
td {
  height: 53px;
  padding: 2px 0 0;
  border-bottom: 2px solid #9a9a9a;
  border-right: 2px solid #b9bdc6;
}
tr:first-child td {
  height: 65px;
  border-top: 2px solid #a5a5a5;
}
tr:last-child td {
  height: 49px;
  border-bottom: none;
}
th:last-child, td:last-child {
  border-right: none;
}
tbody tr:nth-child(even) {
  background: #fffdc0;
}
td:nth-child(-n+2) {
  background: #d2dce9;
  border-bottom-color: #bfc9d6;
  padding-left: 2px;
  text-align: center;
}
td:first-child {
  font-size: 20px;
}
td:nth-child(3) {
  padding-left: 30px;
}
td:nth-child(4) {
  padding-right: 4px;
  text-align: right;
}
td:nth-child(5) {
  padding-right: 12px;
  text-align: right;
}
.chart-pane {
  border-left: 8px solid #f1f1f1;
}
.timescale {
  width: 100%;
  height: 119px;
}
.chart {
  width: 100%;
  height: 1439px;
  margin-top: 7px;
  overflow: hidden;
}
.timescale text, .chart text {
  font-family: "DejaVu Sans Condensed", "DejaVu Sans", sans-serif;
  font-stretch: condensed;
  font-size: 23px;
  fill: #1a1a1a;
}
.chart .note {
  font-size: 31px;
  font-weight: 700;
  fill: #e01020;
}
.hscroll {
  flex: 1;
  background: #eee;
  padding-top: 17px;
}
.thumb {
  display: block;
  height: 8px;
  border-radius: 4px;
  background: #858585;
}
.table-thumb {
  width: 505px;
  margin-left: 36px;
}
.chart-thumb {
  margin: 0 138px 0 843px;
}
.vscroll {
  display: flex;
  flex-direction: column;
  justify-content: space-between;
  background: #eee;
  padding-top: 36px;
}
.vthumb {
  width: 7px;
  height: 1006px;
  margin-left: 15px;
  border-radius: 4px;
  background: #858585;
}
.corner {
  width: 31px;
  height: 36px;
}

/* bottom edit bar */
.edit-bar {
  display: flex;
  align-items: center;
  height: 53px;
  padding: 0 5px;
  background: #dbe7f5;
  border-top: 3px solid #a3a7ae;
  border-bottom: 1px solid #8e9bb0;
  font-size: 22px;
}
.edit-bar .sep {
  width: 1px;
  height: 43px;
  margin: 0 5px;
  background: #a9b6c8;
}
.edit-bar button {
  width: 45px;
  color: #8c9198;
}
.edit-bar button svg {
  width: 30px;
  height: 18px;
  margin: 0 auto;
}
.edit-bar .pale {
  width: 47px;
  color: #b3bcc8;
}
.edit-bar select, .w-duration {
  padding-top: 4px;
}
.grip {
  width: 12px;
  height: 36px;
  margin-right: 5px;
  background: radial-gradient(circle, #9aa7b8 1px, transparent 2px) 0 0 / 6px 6px;
}
.w-progress { width: 135px; }
.w-date { width: 228px; }
.w-library { width: 258px; }
.w-duration {
  width: 175px;
  height: 44px;
  padding-left: 5px;
  background: #fff;
  color: #9a9a9a;
}
.w-duration::placeholder {
  color: #9a9a9a;
}

/* status bar */
.status-bar {
  display: flex;
  align-items: center;
  height: 43px;
  padding-left: 5px;
  background: #87a7d6;
  color: #2b3a56;
}
.status-left {
  width: 34px;
  height: 36px;
}
.status-icons {
  display: flex;
  height: 38px;
  margin: 5px 10px 0 auto;
}
.status-icons button {
  display: grid;
  place-items: center;
  width: 43px;
}
.status-icons svg {
  width: 32px;
  height: 32px;
}
.status-icons .on {
  background: #b9cdf2;
}
.status-date, .status-zoom {
  padding-top: 2px;
}
.status-zoom {
  margin: 0 20px 0 14px;
}
.zoom-btn {
  width: 16px;
  font-size: 28px;
  line-height: 30px;
}
.status-bar input {
  width: 109px;
  height: 22px;
  margin: 0 8px;
  appearance: none;
  background: linear-gradient(#33405a, #33405a) center / 100% 3px no-repeat;
}
.status-bar input::-webkit-slider-thumb {
  appearance: none;
  width: 7px;
  height: 21px;
  background: #444c5c;
}
.pointer {
  position: absolute;
  left: 71.6%;
  top: 353px;
  width: 22px;
  height: 38px;
}
```
FILE: script.js
```js
// ribbon toggles, two rows of 14
const toggleIcons = ["b1", "b2", "b3", "b4", "b5", "b6", "b7", "b8", "b9", "b10", "b11", "b12", "b13", "b14",
  "c1", "c2", "c3", "cal", "c5", "c6", "b11", "c8", "c9", "c10", "c11", "c12", "c13", "c14"];
const togglesOn = [0, 1, 2, 4, 6, 7, 8, 9, 10, 11, 16, 17, 18, 20, 21, 22];
document.getElementById("toggles").innerHTML = toggleIcons.map((id, i) =>
  `<button class="${togglesOn.includes(i) ? "on" : ""}" aria-label="Show/hide ${i + 1}"><svg><use href="#${id}"/></svg></button>`).join("");

// project tree: [level, icon, label, expander, fill]
const tree = [
  [0, "globe", "Construction Project", "-"],
  [1, "program", "Program"],
  [1, "person", "Permanent Resources", "+"],
  [1, "consum", "Consumable Resources", "+"],
  [1, "bank", "Cost Centers", "+"],
  [1, "folder", "Code Libraries", "-"],
  [2, "folder", "Build Stages", "+"],
  [2, "folder", "Design Discipline", "+"],
  [2, "folder", "Floor Level", "+"],
  [2, "foldercheck", "Procurement Stages", "+"],
  [2, "foldercheck", "Trades Contractor", "-"],
  [3, "list", "ACME Builders", "", "#ffff00"],
  [3, "list", "Alan's Landscaping", "", "url(#p-orange)"],
  [3, "list", "Bee Concrete Frame", "", "url(#p-pink)"],
  [3, "list", "Bricklayer & Son Ltd", "", "url(#p-brick)"],
  [3, "list", "C Harvey - Mechanical Fitter", "", "#d8d870"],
  [3, "list", "Carpenter & Co", "", "url(#p-lattice)"],
  [3, "list", "DD Groundworker", "", "url(#p-blue)"],
  [3, "list", "Default", "", "url(#p-default)"],
  [3, "list", "Drywall Cooperative", "", "url(#p-drywall)"],
  [3, "list", "H G Demolition", "", "#00ff00"],
  [3, "list", "M&E Trades", "+", "#ffff00"],
  [3, "list", "Nigel's Plumbing", "", "url(#p-maroon)"],
  [3, "list", "Outside Glazing plc", "", "url(#p-glazing)"],
  [3, "list", "Peter Painter", "", "url(#p-painter)"],
  [3, "list", "Phil's Ceilings", "", "url(#p-ceiling)"],
  [3, "list", "Southern Roofing", "", "url(#p-roof)"],
  [3, "list", "Sparky Electrician", "", "url(#p-spark)"],
  [3, "list", "Steve's Steel Frame & Co", "", "url(#p-steel)"],
  [3, "list", "Tubular Scaffolding", "", "url(#p-tube)"],
  [1, "cal", "Calendars", "+"],
  [1, "b4", "Progress Periods", "+"],
  [1, "wbs", "WBS", "+"],
  [1, "pool", "Task Pools", "+"],
  [1, "ifc", "IFC Products", "+"],
  [1, "milestone", "Milestone Appearances", "+"]
];

function treeRow([level, icon, label, expander, fill], i) {
  let html = "";
  for (let j = 0; j < level; j++) {
    html += `<span class="cell${j === 1 ? " v" : ""}"></span>`;
  }
  const next = tree[i + 1];
  const last = !next || next[0] < level || label === "Trades Contractor";
  html += `<span class="cell h${level ? " v" : ""}${last ? " last" : ""}">`;
  if (expander) {
    html += `<button class="expander${expander === "+" ? " plus" : ""}" aria-label="Toggle ${label.replace("&", "&amp;")}"></button>`;
  }
  html += `</span><span class="cell"><svg class="icon"><use href="#${icon}"/></svg></span>`;
  if (fill) {
    html += `<svg class="swatch"><rect x="1" y="1" width="51" height="29" fill="${fill}" stroke="#3c3c2c" stroke-width="2"/></svg>`;
  }
  return `<li>${html}<span class="label${label === "Program" ? " selected" : ""}">${label.replace("&", "&amp;")}</span></li>`;
}
document.getElementById("tree").innerHTML = tree.map(treeRow).join("");

// tasks: start and end are working days counted from Monday 14 July 2025
const tasks = [
  { name: "Temporary Services", dur: "2w", date: "8/1/2025", start: 14, end: 24, fill: "url(#p-default)", critical: true },
  { name: "Demo", dur: "2w", date: "8/15/2025", start: 24, end: 34, fill: "#00ff00", critical: true, thick: true },
  { name: "Excavate", dur: "2w", date: "8/29/2025", start: 34, end: 45, fill: "url(#p-default)", critical: true, notch: 35 },
  { name: "Piling", dur: "3w", date: "9/15/2025", start: 45, end: 60, fill: "url(#p-default)", critical: true, mark: "-" },
  { name: "Foundation 1st", dur: "1w", date: "9/22/2025", start: 50, end: 55, fill: "url(#p-blue)", float: 60 },
  { name: "Foundation 2nd", dur: "1w", date: "9/22/2025", start: 50, end: 55, fill: "url(#p-blue)", float: 60 },
  { name: "Ground Slab", dur: "1w 1d", date: "10/6/2025", start: 60, end: 66, fill: "#ffff00", critical: true, thick: true },
  { name: "Walls 1", dur: "1w", date: "10/14/2025", start: 66, end: 71, fill: "url(#p-default)", critical: true },
  { name: "1st Slab", dur: "1w 3d", date: "10/21/2025", start: 71, end: 79, fill: "#ffff00", critical: true, thick: true },
  { name: "Walls 2", dur: "1d", date: "10/31/2025", start: 79, end: 80, fill: "url(#p-default)", critical: true },
  { name: "Roof", dur: "2w", date: "11/3/2025", start: 80, end: 90, fill: "#ffff00", critical: true, thick: true },
  { name: "Windows", dur: "1w", date: "11/3/2025", start: 80, end: 85, fill: "url(#p-default)", float: 90 },
  { name: "Watertight", dur: "", date: "11/17/2025", start: 90, milestone: true },
  { name: "Strike Scaffold", dur: "", date: "11/17/2025", start: 90, milestone: true }
];
// [from row, to row, day, critical]
const links = [[1, 2, 24, 1], [2, 3, 34, 1], [3, 4, 45, 1], [4, 5, 50, 0], [5, 6, 50, 0], [4, 7, 60, 1], [7, 8, 66, 1],
  [8, 9, 71, 1], [9, 10, 79, 1], [10, 11, 80, 1], [11, 12, 80, 0], [11, 13, 90, 1], [13, 14, 90, 1]];
const ROW_COUNT = 27;

let rowsHtml = "";
for (let i = 0; i < ROW_COUNT; i++) {
  const t = tasks[i];
  rowsHtml += t
    ? `<tr><td>${t.mark || "+"}</td><td>${i + 1}</td><td>${t.name}</td><td>${t.dur}</td><td>${t.date}</td></tr>`
    : "<tr><td></td><td></td><td></td><td></td><td></td></tr>";
}
document.getElementById("rows").innerHTML = rowsHtml;

const months = [["July", -9, 14], ["August", 14, 35], ["September", 35, 57], ["October", 57, 80], ["November", 80, 100],
  ["December", 100, 123], ["January", 123, 145], ["February", 145, 165], ["March", 165, 187], ["April", 187, 0]];
const darkMonths = [35, 80, 100, 145];
const darkWeeks = [2, 6, 7, 11, 16, 20, 21, 25, 29, 34, 35, 36, 39];
const darkNumbers = [0, 1, 5, 9, 10, 14, 18, 19, 23, 24, 28, 30, 32, 33, 34, 37, 38];

const rowTop = row => row === 1 ? 0 : 65 + 53 * (row - 2);
const barTop = row => row === 1 ? 22 : rowTop(row) + 10;
const line = (x1, y1, x2, y2, color, width = 2, extra = "") =>
  `<path d="M${x1} ${y1}L${x2} ${y2}" stroke="${color}" stroke-width="${width}" ${extra}/>`;
const text = (x, y, value, anchor = "middle", cls = "") =>
  `<text x="${x}" y="${y}" text-anchor="${anchor}" class="${cls}">${value}</text>`;

function drawTimescale(width, X) {
  const red = "#f04848", dark = "#444";
  let s = line(0, 1, width, 1, "#999", 2) + line(0, 32, width, 32, "#9c9c9c", 4)
    + line(0, 61, width, 61, "#555") + line(0, 90, width, 90, "#444", 3);
  s += line(X(123), 17, X(123), 31, "#d06060");
  s += text(X(123) / 2, 26, "2025") + text((X(123) + width) / 2, 26, "2026");
  for (const [name, from, to] of months) {
    const left = Math.max(0, X(from)), right = to ? X(to) : width;
    s += text((left + right) / 2, 55, name);
    if (from > 0) s += line(left, 45, left, 60, darkMonths.includes(from) ? dark : red);
  }
  for (let w = 0; X(w * 5) < width; w++) {
    const day = new Date(2025, 6, 14 + w * 7).getDate();
    s += line(X(w * 5), 75, X(w * 5), 89, darkWeeks.includes(w) ? dark : red);
    if (w < 39) s += text(X(w * 5) + 5, 84, day, "start");
  }
  for (let k = -1; X(k * 5 + 4) < width; k++) {
    if (k >= 0) s += line(X(k * 5 + 4), 103, X(k * 5 + 4), 119, darkNumbers.includes(k) ? dark : red);
    const n = k < 2 ? k - 2 : k - 1;
    s += text(X(k * 5 + 6.5), 113, n);
  }
  return s;
}

function drawChart(width, X) {
  const height = 1439, end = X(90), begin = X(14);
  let s = `<rect width="${begin}" height="${height}" fill="url(#p-nonwork)"/><rect x="${end}" width="${width - end}" height="${height}" fill="url(#p-nonwork)"/>`;
  s += line(0, 1, width, 1, "#a5a5a5");
  for (let row = 2; row <= ROW_COUNT; row++) {
    s += line(0, rowTop(row) - 1, width, rowTop(row) - 1, "#8f8f8f");
  }
  for (let d = 15; d <= 90; d += 5) {
    s += line(X(d), 0, X(d), height, "#a2a2a2");
  }
  s += line(begin, 0, begin, height, "#a2a2a2");
  const dash = 'stroke-dasharray="23 15 8 15"';
  s += line(begin, 0, begin, height, "#3333d0", 3, dash) + line(X(57), 0, X(57), height, "#6a6aee", 2, dash);
  s += line(X(35), 0, X(35), height, "#444", 2, dash) + line(X(80), 0, X(80), height, "#26264a", 2, dash);
  s += `<rect x="${X(35)}" width="10" height="754" fill="url(#p-holiday)"/>` + line(X(35) + 10, 0, X(35) + 10, 754, "#8a8af4");

  for (const [from, to, day, critical] of links) {
    const color = critical ? "#ee1111" : "#000";
    const y1 = barTop(from) + 34, y2 = barTop(to) + (to > 12 ? 3 : 0);
    s += line(X(day), y1, X(day), y2, critical ? "#f04040" : "#222", 2);
    s += `<path d="M${X(day) - 7} ${y2 - 11}h14l-5 12h-4z" fill="${color}"/>`;
  }

  tasks.forEach((t, i) => {
    const row = i + 1, x = X(t.start), y = barTop(row);
    const labelX = x - (t.milestone ? 24 : 9), w = row > 9 ? 30 : 15;
    s += `<rect x="${labelX - w}" y="${y + 5}" width="${w}" height="26" fill="#fff"/>`;
    s += text(labelX, y + (row === 1 ? 25 : 27), row, "end");
    if (t.milestone) {
      s += `<path d="M${x} ${y + 6}l12 13-12 13-12-13z" fill="#8cb48c" stroke="#e01414" stroke-width="5"/>`;
      return;
    }
    const bw = X(t.end) - x;
    if (t.float) {
      s += line(x + bw, y + 11, X(t.float), y + 11, "#666") + line(x + bw, y + 21, X(t.float), y + 21, "#666");
      s += `<rect x="${x + 2}" y="${y + 2}" width="${bw}" height="32" fill="#000"/>`;
      s += `<rect x="${x + 1}" y="${y + 1}" width="${bw - 2}" height="30" fill="${t.fill}" stroke="#111" stroke-width="2"/>`;
    } else if (t.notch) {
      const n = X(t.notch) - x;
      s += `<path transform="translate(${x} ${y + 2})" d="M0 0h${n - 1}q1 7 7 7t7-7H${bw}v31H${n + 13}q-1-8-7-8t-7 8H0z" fill="${t.fill}" stroke="#d01414" stroke-width="5" stroke-linejoin="round"/>`;
    } else {
      const sw = t.thick ? 6 : 5;
      s += `<rect x="${x}" y="${y + 3}" width="${bw}" height="30" rx="1" fill="${t.fill}" stroke="${t.thick ? "#f00a0a" : "#d81414"}" stroke-width="${sw}"/>`;
    }
  });

  // selected text annotation
  const left = X(57) - 98, top = 57, w = 203, h = 69;
  s += `<rect x="${left + 6}" y="${top + 6}" width="${w - 12}" height="${h - 12}" fill="#fff" stroke="#c0c0c0" stroke-width="12"/>`;
  for (const hx of [0, 0.5, 1]) {
    for (const hy of [0, 0.5, 1]) {
      if (hx === 0.5 && hy === 0.5) continue;
      s += `<rect x="${left + hx * (w - 13)}" y="${top + hy * (h - 13)}" width="13" height="13"/>`;
    }
  }
  return s + text(left + w / 2, top + 46, "Client Visit", "middle", "note");
}

function draw() {
  const chart = document.getElementById("chart");
  const width = chart.getBoundingClientRect().width;
  const day = width / 197;
  const X = d => Math.round(9 + d * day);
  chart.innerHTML = drawChart(width, X);
  document.getElementById("timescale").innerHTML = drawTimescale(width, X);
}
draw();
window.addEventListener("resize", draw);
```
